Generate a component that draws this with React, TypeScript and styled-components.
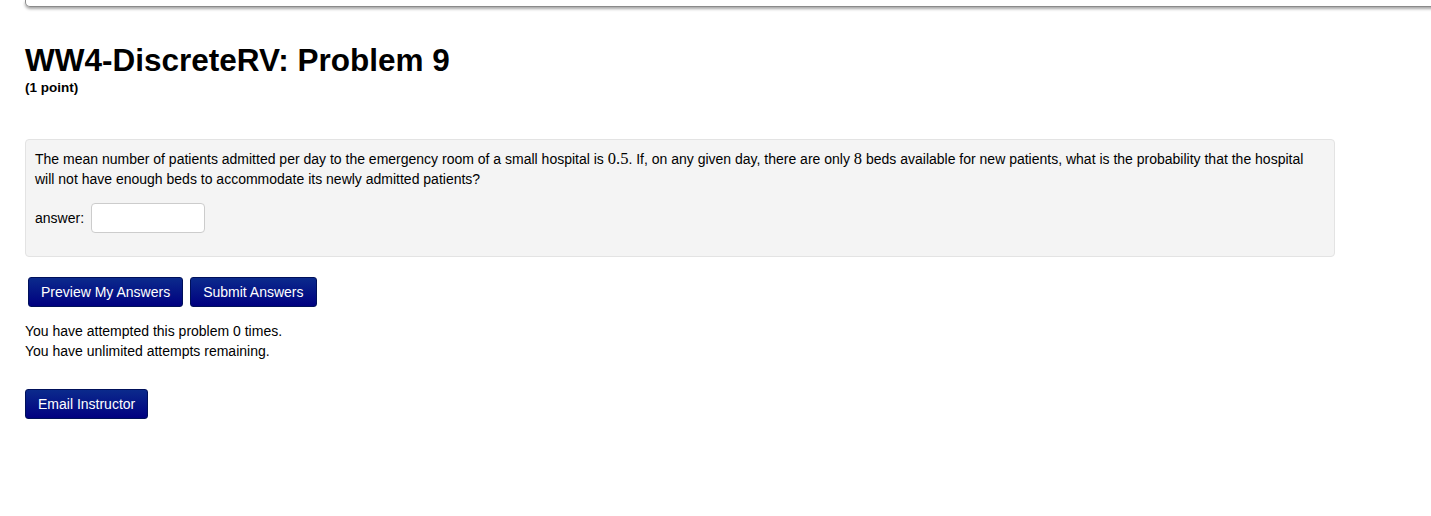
import styled, { createGlobalStyle } from "styled-components";

const GlobalStyle = createGlobalStyle`
  html, body {
    margin: 0;
    padding: 0;
    background: #ffffff;
  }

  body {
    font-family: "Liberation Sans", Arial, sans-serif;
    color: #000000;
    overflow: hidden;
  }
`;

const Page = styled.div`
  width: 1431px;
  height: 516px;
  padding-left: 25px;
  box-sizing: border-box;
`;

const TopPanel = styled.div`
  height: 6px;
  margin-right: -20px;
  border: 1px solid #8a8a8a;
  border-top: none;
  border-radius: 0 0 0 5px;
  box-shadow: 0 2px 3px rgba(0, 0, 0, 0.35);
`;

const Title = styled.h1`
  margin: 33px 0 0;
  font-size: 31.5px;
  font-weight: bold;
  line-height: 40px;
`;

const Points = styled.div`
  margin-top: 1px;
  font-size: 13.5px;
  font-weight: bold;
  line-height: 14px;
`;

const ProblemBox = styled.div`
  margin-top: 44px;
  width: 1310px;
  box-sizing: border-box;
  padding: 9px 9px 23px;
  background: #f4f4f4;
  border: 1px solid #e3e3e3;
  border-radius: 4px;
  font-size: 14px;
  line-height: 20px;
`;

const Statement = styled.p`
  margin: 0 0 14px;
`;

const MathNum = styled.span`
  font-family: "Liberation Serif", "DejaVu Serif", serif;
  font-size: 16.5px;
`;

const AnswerRow = styled.div`
  display: flex;
  align-items: center;
  gap: 7px;
`;

const AnswerInput = styled.input`
  width: 114px;
  height: 30px;
  box-sizing: border-box;
  border: 1px solid #cccccc;
  border-radius: 4px;
  background: #ffffff;
  padding: 4px 6px;
  font-size: 14px;
`;

const ButtonRow = styled.div`
  display: flex;
  gap: 7px;
  margin: 20px 0 0 3px;
`;

const Button = styled.button`
  height: 30px;
  padding: 0 12px;
  border: 1px solid #00105a;
  border-radius: 3px;
  background: linear-gradient(#0b2a8c, #000080);
  color: #ffffff;
  font-family: "Liberation Sans", Arial, sans-serif;
  font-size: 14px;
  cursor: pointer;
`;

const Attempts = styled.div`
  margin-top: 14px;
  font-size: 14px;
  line-height: 20px;
`;

const EmailRow = styled.div`
  margin-top: 28px;
`;

export default function App() {
  return (
    <>
      <GlobalStyle />
      <Page>
        <TopPanel />
        <Title>WW4-DiscreteRV: Problem 9</Title>
        <Points>(1 point)</Points>
        <ProblemBox>
          <Statement>
            The mean number of patients admitted per day to the emergency room
            of a small hospital is <MathNum>0.5</MathNum>. If, on any given day,
            there are only <MathNum>8</MathNum> beds available for new patients,
            what is the probability that the hospital will not have enough beds
            to accommodate its newly admitted patients?
          </Statement>
          <AnswerRow>
            <span>answer:</span>
            <AnswerInput type="text" />
          </AnswerRow>
        </ProblemBox>
        <ButtonRow>
          <Button>Preview My Answers</Button>
          <Button>Submit Answers</Button>
        </ButtonRow>
        <Attempts>
          You have attempted this problem 0 times.
          <br />
          You have unlimited attempts remaining.
        </Attempts>
        <EmailRow>
          <Button>Email Instructor</Button>
        </EmailRow>
      </Page>
    </>
  );
}
